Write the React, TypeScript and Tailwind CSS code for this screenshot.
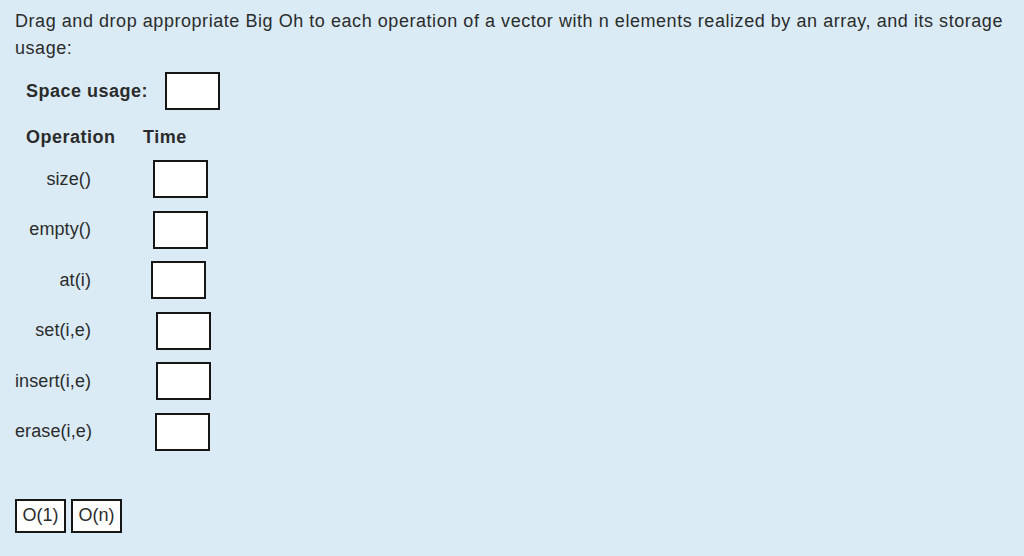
import React from "react";

const rows = [
  { label: "size()", ml: "ml-[62px]" },
  { label: "empty()", ml: "ml-[62px]" },
  { label: "at(i)", ml: "ml-[60px]" },
  { label: "set(i,e)", ml: "ml-[65px]" },
  { label: "insert(i,e)", ml: "ml-[65px]" },
  { label: "erase(i,e)", ml: "ml-[64px]" },
];

const DropBox = ({ className = "" }: { className?: string }) => (
  <div
    className={`w-[55px] h-[38px] bg-white border-2 border-[#161616] shrink-0 ${className}`}
  ></div>
);

export default function App() {
  return (
    <div
      className="w-full h-[556px] bg-[#daebf6] text-[#2b2b2b] px-[15px] pt-[8px] overflow-hidden"
      style={{ fontFamily: '"Liberation Sans", Arial, sans-serif' }}
    >
      <p className="text-[18px] leading-[27px] tracking-[0.55px]">
        Drag and drop appropriate Big Oh to each operation of a vector with n
        elements realized by an array, and its storage usage:
      </p>

      {/* space usage */}
      <div className="flex items-center mt-[10px] ml-[11px]">
        <span className="text-[18px] font-bold w-[139px] tracking-[0.5px]">Space usage:</span>
        <DropBox />
      </div>

      {/* header */}
      <div className="flex items-center mt-[17px] ml-[11px] text-[18px] font-bold leading-[20px] tracking-[0.5px]">
        <span className="w-[117px]">Operation</span>
        <span>Time</span>
      </div>

      {/* rows */}
      <div className="flex flex-col gap-[12.6px] mt-[13px]">
        {rows.map((r) => (
          <div key={r.label} className="flex items-center">
            <span className="w-[76px] text-right text-[18px] tracking-[0.1px] whitespace-nowrap">
              {r.label}
            </span>
            <DropBox className={r.ml} />
          </div>
        ))}
      </div>

      {/* tokens */}
      <div className="flex gap-[5px] mt-[48px]">
        {["O(1)", "O(n)"].map((t) => (
          <div
            key={t}
            className="w-[51px] h-[34px] bg-white border-2 border-[#161616] flex items-center justify-center text-[18px]"
          >
            {t}
          </div>
        ))}
      </div>
    </div>
  );
}
